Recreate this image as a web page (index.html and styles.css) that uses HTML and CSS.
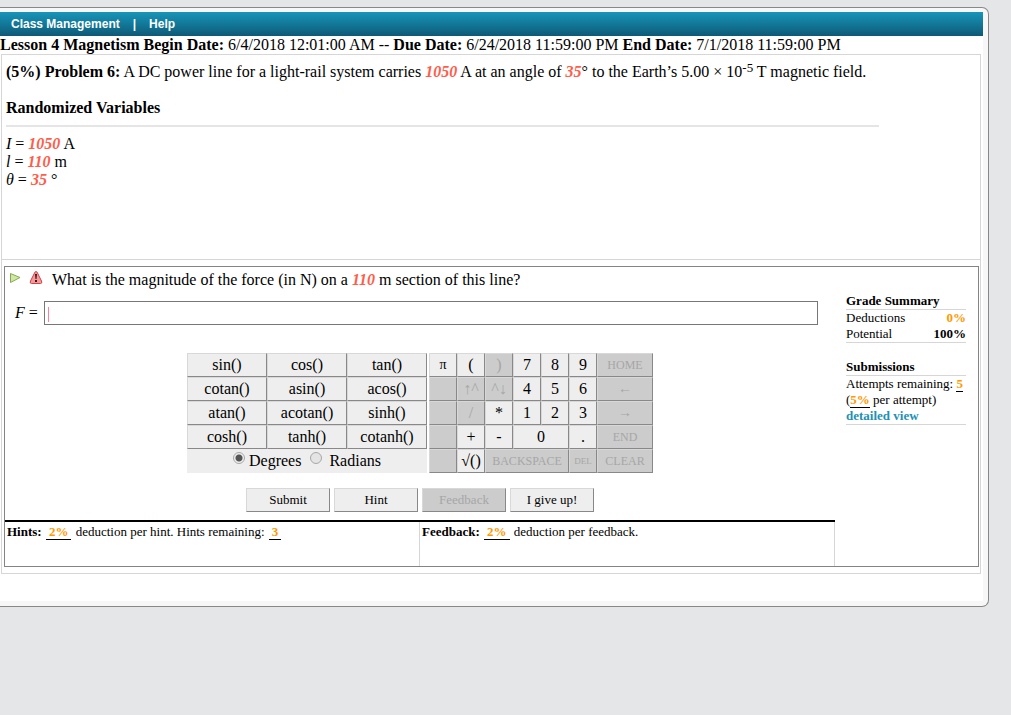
FILE: index.html
```html
<!DOCTYPE html>
<html lang="en">
<head>
  <meta charset="UTF-8" />
  <meta name="viewport" content="width=device-width, initial-scale=1.0"/>
  <title>Lesson 4 Magnetism</title>
  <link rel="stylesheet" href="styles.css">
</head>
<body>
  <div class="shell">
    <div class="page">
      <nav class="menu">
        <a href="#">Class Management</a>
        <span class="divider">|</span>
        <a href="#">Help</a>
      </nav>

      <header class="lesson">
        <b>Lesson 4 Magnetism</b> <b>Begin Date:</b> 6/4/2018 12:01:00 AM -- <b>Due Date:</b> 6/24/2018 11:59:00 PM <b>End Date:</b> 7/1/2018 11:59:00 PM
      </header>

      <main class="assignment">
        <!-- Problem statement -->
        <section class="problem">
          <p><b>(5%) Problem 6:</b> A DC power line for a light-rail system carries <em class="rand">1050</em> A at an angle of <em class="rand">35</em>° to the Earth’s 5.00 × 10<sup>-5</sup> T magnetic field.</p>
          <h2>Randomized Variables</h2>
          <hr>
          <p><i>I</i> = <em class="rand">1050</em> A</p>
          <p><i>l</i> = <em class="rand">110</em> m</p>
          <p><i>θ</i> = <em class="rand">35</em> °</p>
        </section>

        <!-- Question part -->
        <section class="part">
          <div class="work">
            <div class="question">
              <svg width="12" height="14" viewBox="0 0 12 14">
                <path d="M1.5 2.5 L11 6.5 L1.5 11.5 Z" fill="#cfe8a0" stroke="#86aa54" stroke-linejoin="round"/>
              </svg>
              <svg width="14" height="14" viewBox="0 0 14 14">
                <path d="M7 0.5 Q8 0.5 8.5 2 L12.5 10 Q13.5 12.5 11.5 12.5 L2.5 12.5 Q0.5 12.5 1.5 10 L5.5 2 Q6 0.5 7 0.5 Z" fill="#f29a9a" stroke="#cc444c"/>
                <path d="M6 3 L8 3 L7.5 8 L6.5 8 Z M6 9 H8 V11 H6 Z" fill="#4a1015"/>
              </svg>
              <p>What is the magnitude of the force (in N) on a <em class="rand">110</em> m section of this line?</p>
            </div>

            <div class="answer">
              <label for="answer"><i>F</i> =</label>
              <input type="text" id="answer">
            </div>

            <div class="keypad">
              <div class="functions">
                <button>sin()</button>
                <button>cos()</button>
                <button>tan()</button>
                <button>cotan()</button>
                <button>asin()</button>
                <button>acos()</button>
                <button>atan()</button>
                <button>acotan()</button>
                <button>sinh()</button>
                <button>cosh()</button>
                <button>tanh()</button>
                <button>cotanh()</button>
                <div class="angle">
                  <input type="radio" name="angle" id="degrees" checked>
                  <label for="degrees">Degrees</label>
                  <input type="radio" name="angle" id="radians">
                  <label for="radians">Radians</label>
                </div>
              </div>
              <div class="numbers">
                <button class="symbol">π</button>
                <button>(</button>
                <button disabled>)</button>
                <button>7</button>
                <button>8</button>
                <button>9</button>
                <button class="small" disabled>HOME</button>

                <button disabled></button>
                <button disabled>↑^</button>
                <button disabled>^↓</button>
                <button>4</button>
                <button>5</button>
                <button>6</button>
                <button class="symbol" disabled>←</button>

                <button disabled></button>
                <button disabled>/</button>
                <button>*</button>
                <button>1</button>
                <button>2</button>
                <button>3</button>
                <button class="symbol" disabled>→</button>

                <button disabled></button>
                <button>+</button>
                <button>-</button>
                <button class="wide">0</button>
                <button>.</button>
                <button class="small" disabled>END</button>

                <button disabled></button>
                <button>√()</button>
                <button class="small backspace" disabled>BACKSPACE</button>
                <button class="tiny" disabled>DEL</button>
                <button class="small" disabled>CLEAR</button>
              </div>
            </div>

            <div class="actions">
              <button>Submit</button>
              <button>Hint</button>
              <button disabled>Feedback</button>
              <button>I give up!</button>
            </div>

            <div class="notes">
              <div><b>Hints:</b> <span class="value padded">2%</span> deduction per hint. Hints remaining: <span class="value padded">3</span></div>
              <div><b>Feedback:</b> <span class="value padded">2%</span> deduction per feedback.</div>
            </div>
          </div>

          <aside class="summary">
            <h3>Grade Summary</h3>
            <dl>
              <dt>Deductions</dt>
              <dd class="orange">0%</dd>
              <dt>Potential</dt>
              <dd>100%</dd>
            </dl>
            <h3>Submissions</h3>
            <div class="attempts">
              <p>Attempts remaining: <span class="value">5</span></p>
              <p>(<span class="value">5%</span> per attempt)</p>
              <a href="#">detailed view</a>
            </div>
          </aside>
        </section>
      </main>
    </div>
  </div>
</body>
</html>
```

FILE: styles.css
```css
* {
  box-sizing: border-box;
}

body {
  margin: 0;
  padding-top: 7px;
  background: #e5e6e8;
  color: #000;
  font: 16px/18px "Liberation Serif", "Times New Roman", serif;
}

p, h2, h3, dl, dd {
  margin: 0;
}

.shell {
  margin-right: 22px;
  padding: 4px 5px 5px 0;
  border: 1px solid #888;
  border-left: none;
  border-radius: 0 7px 7px 0;
  background: #f7f7f7;
}

.page {
  padding-bottom: 27px;
  background: white;
}

.menu {
  display: flex;
  gap: 13px;
  padding-left: 11px;
  background: linear-gradient(#1895ba, #0d5a76);
  color: white;
  font: bold 12px/24px "Liberation Sans", Arial, sans-serif;
}

.menu a {
  color: white;
  text-decoration: none;
}

.lesson {
  white-space: nowrap;
}

.assignment {
  margin: 0 2px 0 1px;
  border: 1px solid #d6d6d6;
}

.problem {
  min-height: 205px;
  padding: 8px 4px;
  border-bottom: 1px solid #d6d6d6;
}

.problem h2 {
  margin-top: 18px;
  font-size: 16px;
}

.problem hr {
  width: 90%;
  height: 2px;
  margin: 8px 0;
  border: none;
  background: #e5e5e5;
}

.rand {
  color: #ff5d4a;
  font-weight: bold;
}

sup {
  font-size: 13px;
  line-height: 0;
  vertical-align: 5px;
}

.part {
  display: flex;
  margin: 6px 1px 6px 2px;
  border: 1px solid #848484;
}

.work {
  flex: 1;
}

.question {
  display: flex;
  gap: 8px;
  padding: 4px 4px 0;
}

.question p {
  margin-left: 1px;
}

.answer {
  display: flex;
  align-items: center;
  gap: 6px;
  padding: 12px 17px 0 10px;
}

.answer input {
  flex: 1;
  height: 24px;
  border: 1px solid #777;
  /* pink text cursor at the start of the field */
  background: linear-gradient(#ff7f9c, #ff7f9c) 3px 5px / 1px 15px no-repeat white;
  font: inherit;
}

.keypad {
  display: flex;
  justify-content: center;
  gap: 2px;
  margin-top: 28px;
}

.functions {
  display: grid;
  grid-template-columns: repeat(3, 80px);
  grid-auto-rows: 24px;
  background: #eee;
}

.numbers {
  display: grid;
  grid-template-columns: repeat(6, 28px) 56px;
  grid-auto-rows: 24px;
}

button {
  padding: 0;
  border: 1px solid;
  border-color: #d8d8d8 #888 #888 #d8d8d8;
  background: #eee;
  color: black;
  font: inherit;
}

button:disabled {
  background: #ccc;
  color: #a6a6a6;
}

.small {
  font-size: 12px;
}

.symbol {
  font-size: 14px;
}

.tiny {
  font-size: 9px;
}

.wide {
  grid-column: span 2;
}

.backspace {
  grid-column: span 3;
}

.angle {
  display: flex;
  grid-column: 1 / -1;
  justify-content: center;
  gap: 4px;
  padding-top: 3px;
}

.angle input {
  appearance: none;
  width: 12px;
  height: 12px;
  margin: 0;
  border: 1px solid #a8a8a8;
  border-radius: 50%;
  background: #e4e4e4;
}

.angle input:checked {
  background: radial-gradient(circle, #555 3px, #eee 4px);
}

.angle label + input {
  margin-left: 5px;
}

.angle input + label:last-child {
  margin-left: 3px;
}

.actions {
  display: flex;
  justify-content: center;
  gap: 4px;
  margin: 15px 0 8px;
}

.actions button {
  width: 84px;
  height: 24px;
  font-size: 13px;
}

.notes {
  display: grid;
  grid-template-columns: 1fr 1fr;
  border-top: 2px solid black;
  font-size: 13px;
  line-height: 16px;
}

.notes div {
  min-height: 44px;
  padding: 2px;
  border-right: 1px solid #d6d6d6;
}

.value {
  border-bottom: 1px solid black;
  color: #f90;
  font-weight: bold;
}

.padded {
  margin: 0 1px;
  padding: 0 3px;
}

.summary {
  width: 143px;
  padding: 26px 12px 0 11px;
  font-size: 13px;
  line-height: 16px;
}

.summary h3 {
  border-bottom: 1px solid #d6d6d6;
  font-size: 13px;
}

.summary dl {
  display: grid;
  grid-template-columns: 1fr auto;
  margin-bottom: 16px;
  border-bottom: 1px solid #d6d6d6;
}

.summary dd {
  font-weight: bold;
  text-align: right;
}

.summary .orange {
  color: #f90;
}

.attempts {
  border-bottom: 1px solid #d6d6d6;
}

.attempts a {
  color: #2290b5;
  font-weight: bold;
  text-decoration: none;
}
```
